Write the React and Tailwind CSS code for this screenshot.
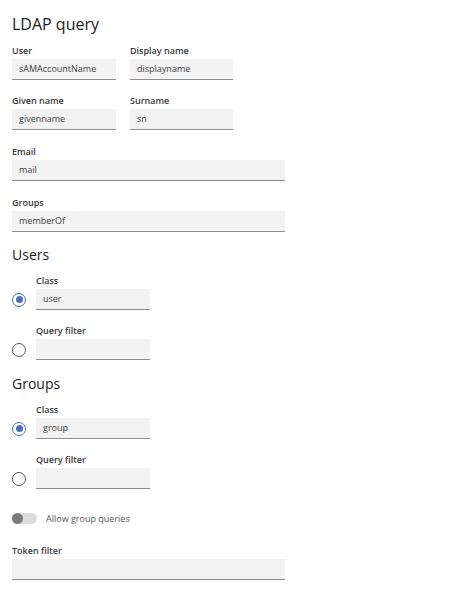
import React from "react";

function Label({ children, className = "" }) {
  return (
    <div className={"text-[9px] leading-[12px] font-semibold text-[#3a3a3a] mb-[2px] " + className}>
      {children}
    </div>
  );
}

function Input({ value, className = "" }) {
  return (
    <div
      className={
        "h-[21px] bg-[#f2f2f2] border-b-[1.5px] border-[#8e8e8e] px-[7px] flex items-center text-[9px] text-[#444444] " +
        className
      }
    >
      {value}
    </div>
  );
}

function Field({ label, value, width, className = "" }) {
  return (
    <div className={className}>
      <Label>{label}</Label>
      <Input value={value} className={width} />
    </div>
  );
}

function Radio({ checked }) {
  return checked ? (
    <div className="w-[14px] h-[14px] rounded-full border-[1.5px] border-[#4f6db3] flex items-center justify-center">
      <div className="w-[7px] h-[7px] rounded-full bg-[#4f6db3]" />
    </div>
  ) : (
    <div className="w-[14px] h-[14px] rounded-full border-[1.2px] border-[#555555]" />
  );
}

function RadioField({ checked, label, value, className = "" }) {
  return (
    <div className={"flex " + className}>
      <div className="w-[24px] flex flex-col">
        <div className="h-[14px]" />
        <div className="h-[21px] flex items-center">
          <Radio checked={checked} />
        </div>
      </div>
      <div>
        <Label>{label}</Label>
        <Input value={value} className="w-[114px]" />
      </div>
    </div>
  );
}

export default function App() {
  return (
    <div
      className="w-[474px] h-[603px] bg-white pl-[12px] pt-[12px]"
      style={{ fontFamily: '"Open Sans", "Noto Sans", sans-serif' }}
    >
      <div className="text-[16px] leading-[24px] text-[#1a1a1a]">LDAP query</div>

      <div className="flex gap-[14px] mt-[9px]">
        <Field label="User" value="sAMAccountName" width="w-[104px]" />
        <Field label="Display name" value="displayname" width="w-[103px]" />
      </div>
      <div className="flex gap-[14px] mt-[15px]">
        <Field label="Given name" value="givenname" width="w-[104px]" />
        <Field label="Surname" value="sn" width="w-[103px]" />
      </div>
      <Field label="Email" value="mail" width="w-[273px]" className="mt-[16px]" />
      <Field label="Groups" value="memberOf" width="w-[273px]" className="mt-[16px]" />

      <div className="text-[14px] leading-[20px] text-[#1a1a1a] mt-[13px]">Users</div>
      <RadioField checked label="Class" value="user" className="mt-[10px]" />
      <RadioField label="Query filter" value="" className="mt-[15px]" />

      <div className="text-[14px] leading-[20px] text-[#1a1a1a] mt-[14px]">Groups</div>
      <RadioField checked label="Class" value="group" className="mt-[10px]" />
      <RadioField label="Query filter" value="" className="mt-[15px]" />

      <div className="flex items-center mt-[24px] h-[11px]">
        <div className="w-[25px] h-[11px] rounded-full bg-[#dcdcdc] relative">
          <div className="absolute left-0 top-0 w-[11px] h-[11px] rounded-full bg-[#7b7b7b]" />
        </div>
        <div className="ml-[9px] text-[9px] text-[#555555]">Allow group queries</div>
      </div>

      <Field label="Token filter" value="" width="w-[273px]" className="mt-[21px]" />
    </div>
  );
}
